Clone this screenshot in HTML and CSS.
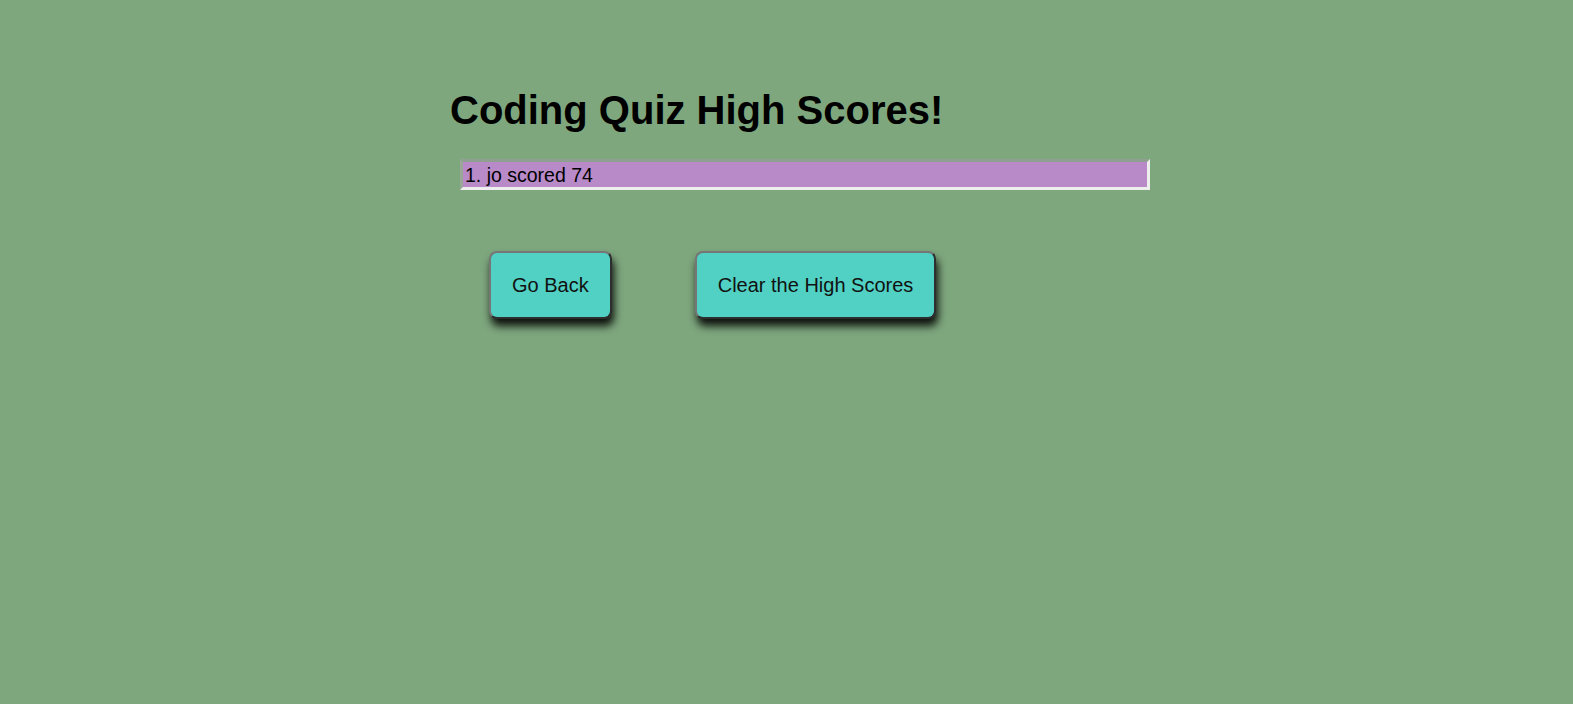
FILE: index.html
```html
<!DOCTYPE html>
<html lang="en">
<head>
<meta charset="utf-8">
<title>Coding Quiz High Scores</title>
<link rel="stylesheet" href="styles.css">
</head>
<body>
<main class="page">
  <h1 class="title">Coding Quiz High Scores!</h1>
  <ol class="scores">
    <li class="score">1. jo scored 74</li>
  </ol>
  <div class="actions">
    <button class="btn">Go Back</button>
    <button class="btn">Clear the High Scores</button>
  </div>
</main>
</body>
</html>
```
FILE: styles.css
```css
html, body {
  margin: 0;
  padding: 0;
  background: #7ea77e;
}
body {
  font-family: "Liberation Sans", Arial, sans-serif;
  color: #000;
  min-height: 100vh;
}
.page {
  display: flex;
  flex-direction: column;
  align-items: flex-start;
  padding: 87px 0 60px 449px;
  min-height: 100vh;
  box-sizing: border-box;
}
.title {
  margin: 0 0 0 1px;
  font-size: 40px;
  line-height: 46px;
  font-weight: bold;
}
.scores {
  list-style: none;
  margin: 26px 0 0 11px;
  padding: 0;
  width: 690px;
}
.score {
  background: #b88ac8;
  border: 3px solid;
  border-color: #8f9f90 #eeeeee #eeeeee #9aa89a;
  height: 25px;
  line-height: 26px;
  font-size: 19.5px;
  padding: 0 0 0 2px;
}
.actions {
  display: flex;
  gap: 83px;
  margin-top: 61px;
  padding-left: 40px;
}
.btn {
  font-family: "Liberation Sans", Arial, sans-serif;
  font-size: 20px;
  line-height: 24px;
  color: #111;
  background: #50d1c4;
  padding: 20px 21px;
  border: 2px solid;
  border-color: #767676 #2e2e2e #2e2e2e #767676;
  border-radius: 8px;
  box-shadow: 2px 7px 9px rgba(0, 0, 0, 0.9);
  cursor: pointer;
}
```
